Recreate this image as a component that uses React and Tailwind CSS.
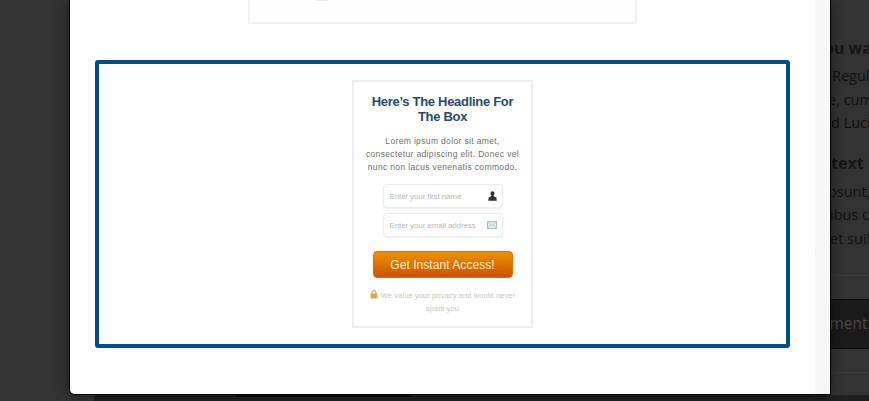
const FONT = { sans: "font-['Liberation_Sans',Arial,sans-serif]" };

function UserIcon() {
  return (
    <svg width="9" height="10" viewBox="0 0 9 10" className="shrink-0">
      <path d="M4.5.2c1.3 0 2 1 2 2.2 0 .9-.4 1.6-.9 2l.1.8 2.6 1.2.5 3.4H.2L.7 6.4l2.6-1.2.1-.8c-.5-.4-.9-1.100-.9-2C2.500 1.200 3.200.2 4.500.2z" fill="#333" />
    </svg>
  );
}

function MailIcon() {
  return (
    <svg width="10" height="8" viewBox="0 0 10 8" className="shrink-0">
      <rect x="0.5" y="0.5" width="9" height="7" fill="#e4eef1" stroke="#a9c0c8" />
      <path d="M.7.8 5 4.6 9.3.8M.8 7.2 3.6 3.6M9.2 7.2 6.4 3.6" fill="none" stroke="#a9c0c8" strokeWidth="0.7" />
    </svg>
  );
}

function LockIcon() {
  return (
    <svg width="8" height="9" viewBox="0 0 8 9" className="mr-[3px] inline align-[-1px]">
      <path d="M2 4V2.6a2 2 0 0 1 4 0V4" fill="none" stroke="#a89a70" strokeWidth="1" />
      <rect x="0.5" y="3.6" width="7" height="5" rx="0.5" fill="#d3ad52" />
    </svg>
  );
}

function Field({ placeholder, icon }) {
  return (
    <div className="flex h-[24px] w-[120px] items-center justify-between rounded-[4px] border border-[#ebebeb] bg-white pl-[6px] pr-[5px] shadow-[0_1px_2px_rgba(0,0,0,0.08)]">
      <span className="pt-[2px] text-[8px] leading-none tracking-[-0.12px] text-[#b8b8b8]">{placeholder}</span>
      {icon}
    </div>
  );
}

function OptinBox() {
  return (
    <div className="flex h-[248px] w-[181px] flex-col items-center border-[2px] border-[#eeeeee] bg-white pt-[12px]">
      <h2 className="w-[160px] text-center text-[13px] font-bold leading-[15px] tracking-[-0.3px] text-[#2c4a63]">
        Here’s The Headline For The Box
      </h2>
      <p className="mt-[11px] w-[160px] text-center text-[8.5px] leading-[13px] tracking-[0.35px] text-[#6f6f6f]">
        Lorem ipsum dolor sit amet, consectetur adipiscing elit. Donec vel nunc non lacus venenatis commodo.
      </p>
      <div className="mt-[10px] flex flex-col gap-[5px]">
        <Field placeholder="Enter your first name" icon={<UserIcon />} />
        <Field placeholder="Enter your email address" icon={<MailIcon />} />
      </div>
      <button className="mt-[14px] h-[27px] w-[140px] rounded-[4px] border border-[#d9730a] bg-gradient-to-b from-[#ef9000] to-[#c95300] text-[12px] tracking-[0.05px] text-[#fdeedb] shadow-[0_0_2px_rgba(0,0,0,0.15)]">
        Get Instant Access!
      </button>
      <p className="mt-[11px] w-[160px] text-center text-[7.5px] leading-[13px] tracking-[0.1px] text-[#c8c4c4]">
        <LockIcon />
        We value your privacy and would never spam you
      </p>
    </div>
  );
}

function PageBehind() {
  return (
    <div className="h-full overflow-hidden pl-[766px] pt-[38px] font-['Open_Sans',sans-serif] text-[16px] text-[#161616] whitespace-nowrap">
      <p className="h-[20px] pl-[58px] font-bold leading-[20px]">ou wa</p>
      <div className="mt-[6px] flex flex-col pl-[47px] text-[14.5px] leading-[23.5px] text-[#111]">
        <span className="pl-[19px]">Regul</span>
        <span className="pl-[15px]">e, cum</span>
        <span className="pl-[18px]">d Luci</span>
      </div>
      <p className="mt-[16px] h-[24px] pl-[65px] font-bold leading-[24px]">text k</p>
      <div className="mt-[5px] flex flex-col pl-[47px] text-[14.5px] leading-[23.5px] text-[#111]">
        <span className="pl-[15px]">osunt,</span>
        <span className="pl-[17px]">ibus c</span>
        <span className="pl-[17px]">et sui!</span>
      </div>
      <div className="mt-[25px] border-t border-[#3a3a3a]" />
      <div className="mt-[23px] flex h-[50px] items-center border-y border-[#0c0c0c] bg-[#1a1a1a] pl-[30px] text-[15.5px] text-[#4a4a4a]">
        Comment
      </div>
      <div className="mt-[23px] border-t border-[#3a3a3a]" />
    </div>
  );
}

export default function App() {
  return (
    <div className={`relative h-[401px] w-[869px] overflow-hidden bg-[#333333] ${FONT.sans}`}>
      <PageBehind />
      <div className="absolute bottom-0 left-[94px] h-[6px] w-[775px] bg-[#1f1f1f]" />
      <div className="absolute bottom-[4px] left-[236px] h-[3px] w-[175px] bg-black" />
      <div className="absolute left-[70px] top-0 flex h-[394px] w-[760px] rounded-bl-[5px] bg-gradient-to-r from-[#e6e6e6] to-[#f7f7f7] shadow-[0_0_0_1px_#000,0_0_14px_rgba(0,0,0,0.55)]">
        <div className="h-full w-[745px] rounded-bl-[5px] bg-white px-[25px]">
          <div className="mx-auto h-[24px] w-[389px] border-x-2 border-b-2 border-[#f0f2f7] bg-[#fdfdfe]">
            <div className="ml-[66px] h-[1px] w-[12px] bg-[#e6e6ee]" />
          </div>
          <div className="mt-[36px] flex h-[288px] w-[695px] items-center justify-center rounded-[3px] border-[4px] border-[#024e84] bg-white">
            <OptinBox />
          </div>
        </div>
      </div>
    </div>
  );
}
